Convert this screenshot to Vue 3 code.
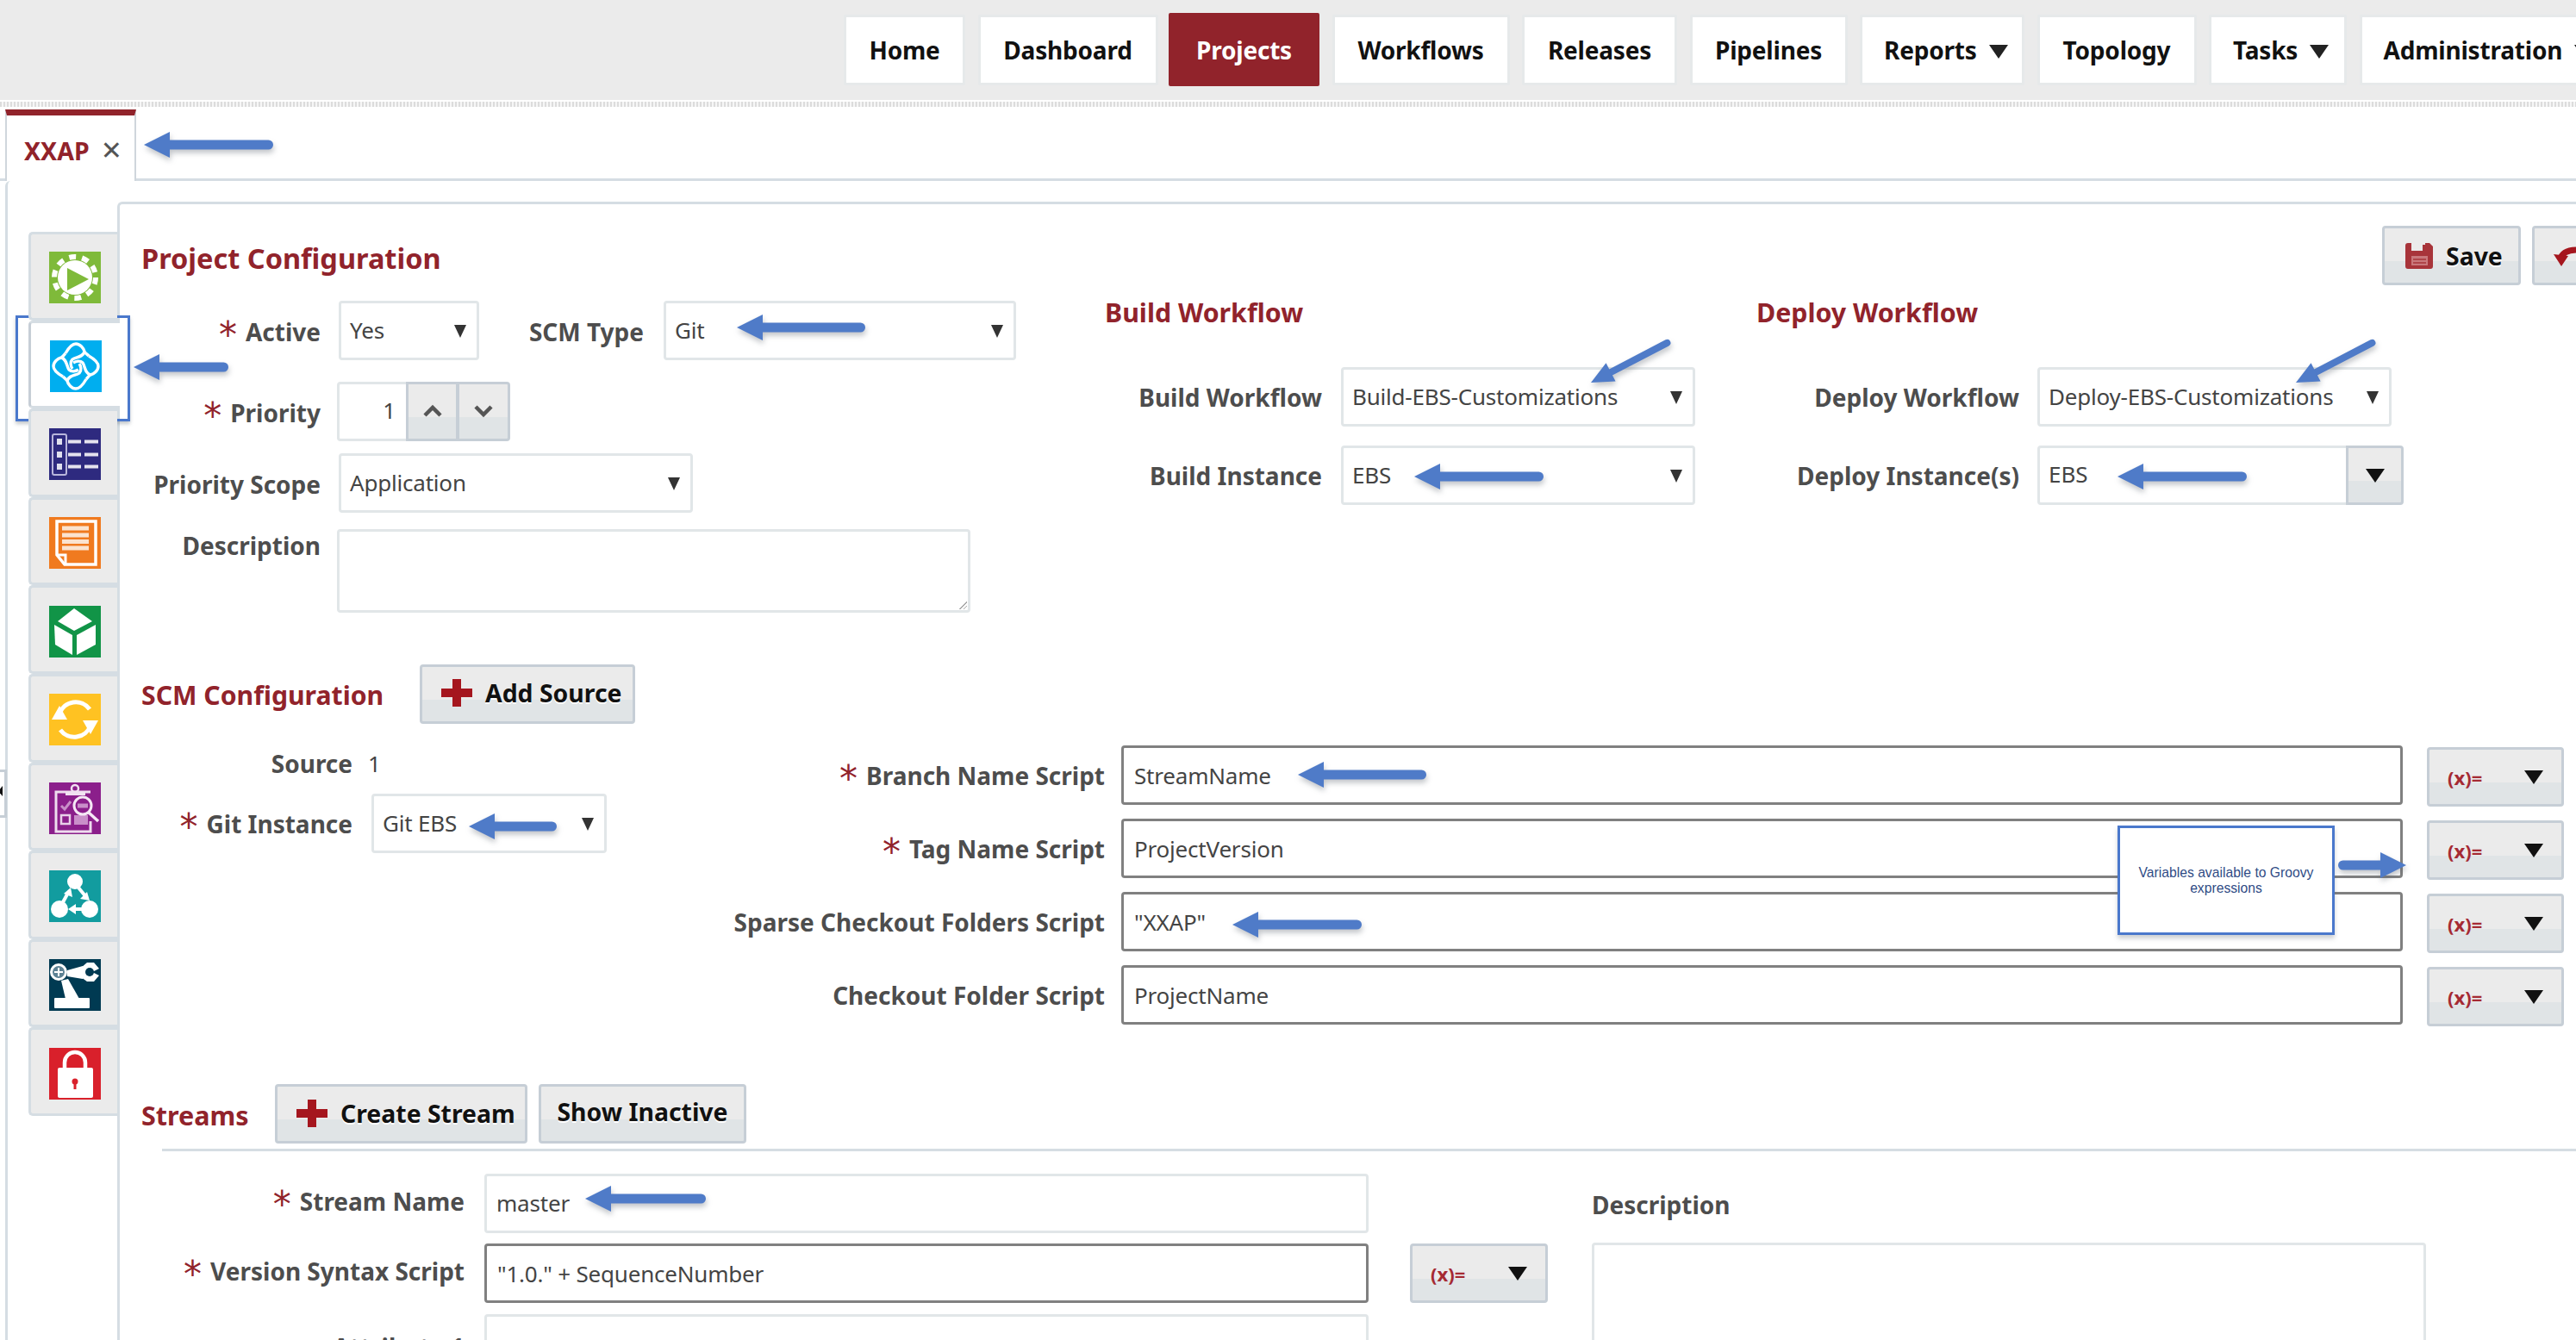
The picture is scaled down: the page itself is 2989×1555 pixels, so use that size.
<template>
  <div class="page">
    <!-- top navigation -->
    <header class="topbar">
      <a
        v-for="item in navItems"
        :key="item.label"
        class="nav-btn"
        :class="{ active: item.active, 'has-caret': item.caret }"
        :style="{ width: item.width + 'px' }"
      >
        {{ item.label }}
        <span v-if="item.caret" class="nav-caret"></span>
      </a>
    </header>
    <div class="stripe"></div>

    <div class="tab-strip">
      <div class="tab">
        <span class="tab-title">XXAP</span>
        <span class="tab-close">✕</span>
      </div>
    </div>

    <div class="outer">
      <!-- icon rail -->
      <nav class="rail">
        <div
          v-for="tab in railTabs"
          :key="tab.name"
          class="rail-tab"
          :class="{ current: tab.name === 'workflow' }"
        >
          <svg class="rail-icon" viewBox="0 0 60 60" :style="{ background: tab.color }">
            <g v-if="tab.name === 'run'">
              <circle cx="30" cy="30" r="20" fill="#fff" />
              <circle cx="30" cy="30" r="24" fill="none" stroke="#fff" stroke-width="6" stroke-dasharray="8 7.08" />
              <path d="M21 19 L46 32 L21 45 Z" fill="#7fba3a" />
            </g>
            <g v-if="tab.name === 'workflow'" fill="none" stroke="#fff" stroke-width="3.4">
              <g v-for="deg in [0, 90, 180, 270]" :key="deg" :transform="`rotate(${deg} 30 30)`">
                <path d="M18 15 C22 8 26 4 30 4 C35 4 39 9 40 13 C41 15 43 16 45 18" />
                <path d="M40 13 C38 20 30 19 26 22 C23 25 24 30 26 33" />
              </g>
            </g>
            <g v-if="tab.name === 'list'">
              <rect x="4" y="7" width="16" height="47" rx="2" fill="none" stroke="#b9b6dc" stroke-width="2" />
              <rect x="9" y="12" width="6" height="7" fill="#e0e0ee" />
              <rect x="9" y="27" width="6" height="7" fill="#e0e0ee" />
              <rect x="9" y="41" width="6" height="7" fill="#e0e0ee" />
              <path d="M22 15.5 H37 M41 15.5 H57 M22 30.5 H37 M41 30.5 H57 M22 44.5 H37 M41 44.5 H57" stroke="#e4e2ee" stroke-width="4" />
            </g>
            <g v-if="tab.name === 'doc'">
              <path d="M9 5 H54 V55 H18 L9 44 Z" fill="none" stroke="#fff" stroke-width="3.5" />
              <path d="M10 44 H19 V54" fill="none" stroke="#fff" stroke-width="3" />
              <path d="M15 13 H46 M15 21 H46 M15 28.500 H46 M15 36 H46" stroke="#fbe3cf" stroke-width="5" />
            </g>
            <g v-if="tab.name === 'cube'" fill="#fff">
              <path d="M29 3 L50 18 L29 29 L10 18 Z" />
              <path d="M6 22 L27 34 V57 L7 45 Z" />
              <path d="M54 22 L32 34 V57 L54 45 Z" />
            </g>
            <g v-if="tab.name === 'sync'" fill="none" stroke="#fff" stroke-width="5">
              <path d="M12 23 A20 20 0 0 1 47 18" />
              <path d="M48 37 A20 20 0 0 1 13 42" />
              <path d="M3 30 L12 14 L21 30 Z M57 31 L48 47 L39 31 Z" fill="#fff" stroke="none" />
            </g>
            <g v-if="tab.name === 'audit'">
              <path d="M48 45 V57 H8 V11 H48" fill="none" stroke="#eedcee" stroke-width="3" />
              <path d="M19 11 H42 V15 H19 Z" fill="#f1e2f1" />
              <circle cx="30" cy="7" r="4" fill="none" stroke="#f1e2f1" stroke-width="2.5" />
              <path d="M14 27 L18 31 L25 22" fill="none" stroke="#c98fc9" stroke-width="3" />
              <rect x="14" y="38" width="10" height="10" fill="none" stroke="#e8cfe8" stroke-width="2.5" />
              <rect x="29" y="38" width="16" height="11" fill="#c98fc9" />
              <circle cx="39" cy="27" r="10" fill="#8b1f8b" stroke="#f5e8f5" stroke-width="3" />
              <path d="M33 27 H45" stroke="#c98fc9" stroke-width="5" />
              <path d="M46 35 L57 45" stroke="#f5e8f5" stroke-width="3.5" />
            </g>
            <g v-if="tab.name === 'network'" fill="#fff">
              <circle cx="30" cy="13" r="9" />
              <circle cx="12" cy="45" r="10" />
              <circle cx="47" cy="45" r="10" />
              <path d="M34 20 L43 31" stroke="#fff" stroke-width="4" />
              <path d="M47 35 L36 33 L44 25 Z" />
              <path d="M16 37 L22 26" stroke="#fff" stroke-width="4" />
              <path d="M25 20 L27 31 L17 27 Z" />
              <path d="M38 45 H26" stroke="#fff" stroke-width="4" />
              <path d="M22 45 L31 39 L31 51 Z" />
            </g>
            <g v-if="tab.name === 'robot'">
              <rect x="6" y="45" width="41" height="12" rx="1" fill="#fff" />
              <path d="M14 25 L22 23 L35 46 L19 46 Z" fill="#fff" />
              <circle cx="11" cy="15" r="8.500" fill="#5d8294" stroke="#fff" stroke-width="3" />
              <path d="M11 10 V20 M6 15 H16" stroke="#fff" stroke-width="2" />
              <path d="M21 13 L39 8 V23 L21 20 Z" fill="#fff" />
              <path d="M37 10 L44 4 H52 L58 11 L50 15 L58 19 L52 26 H44 L37 21 Z" fill="#fff" />
              <circle cx="47" cy="15" r="5" fill="#003a52" />
            </g>
            <g v-if="tab.name === 'security'">
              <path d="M18 26 V17 A12 12 0 0 1 42 17 V26" fill="none" stroke="#fff" stroke-width="4.500" />
              <rect x="10" y="23" width="41" height="35" rx="2" fill="#fff" />
              <circle cx="30" cy="39" r="3.500" fill="#d9202b" />
              <rect x="28.500" y="39" width="3" height="9" fill="#d9202b" />
            </g>
          </svg>
        </div>
      </nav>

      <main class="panel">
        <!-- project config -->
        <section class="config">
          <div class="col-project">
            <h2 class="heading project-heading">Project Configuration</h2>
            <div class="row first-row">
              <label class="label w-208"><i class="req">*</i>Active</label>
              <div class="field select w-163">Yes<span class="caret"></span></div>
              <label class="label scm-type">SCM Type</label>
              <div class="field select w-409">Git<span class="caret"></span></div>
            </div>
            <div class="row priority-row">
              <label class="label w-208"><i class="req">*</i>Priority</label>
              <div class="spinner">
                <div class="spinner-value">1</div>
                <button class="spin-btn">
                  <svg width="24" height="16" viewBox="0 0 24 16"><path d="M3 13 L12 4 L21 13" fill="none" stroke="#555" stroke-width="4.500" /></svg>
                </button>
                <button class="spin-btn">
                  <svg width="24" height="16" viewBox="0 0 24 16"><path d="M3 3 L12 12 L21 3" fill="none" stroke="#555" stroke-width="4.500" /></svg>
                </button>
              </div>
            </div>
            <div class="row scope-row">
              <label class="label w-208">Priority Scope</label>
              <div class="field select w-411">Application<span class="caret"></span></div>
            </div>
            <div class="row desc-row">
              <label class="label w-208">Description</label>
              <div class="field textarea"></div>
            </div>
          </div>

          <div class="col-build">
            <h3 class="heading sub-heading">Build Workflow</h3>
            <div class="row">
              <label class="label w-252">Build Workflow</label>
              <div class="field select w-411">Build-EBS-Customizations<span class="caret"></span></div>
            </div>
            <div class="row row-gap">
              <label class="label w-252">Build Instance</label>
              <div class="field select w-411">EBS<span class="caret"></span></div>
            </div>
          </div>

          <div class="col-deploy">
            <div class="actions">
              <button class="btn save-btn">
                <svg width="32" height="30" viewBox="0 0 32 30">
                  <path d="M0 3 Q0 0 3 0 H7 V9 H20 V2 H23 V0 H28 L32 4 V27 Q32 30 29 30 H3 Q0 30 0 27 Z" fill="#a8343a" />
                  <rect x="7" y="15" width="19" height="11" fill="#c9787c" />
                  <path d="M9 19 H24 M9 23 H24" stroke="#a8343a" stroke-width="1.500" />
                </svg>
                Save
              </button>
              <button class="btn undo-btn">
                <svg width="28" height="26" viewBox="0 0 28 26">
                  <path d="M8 17 Q10 6 28 6" fill="none" stroke="#a5161e" stroke-width="7" />
                  <path d="M0 11 L9 25 L17 13 Z" fill="#a5161e" />
                </svg>
              </button>
            </div>
            <h3 class="heading sub-heading deploy-heading">Deploy Workflow</h3>
            <div class="row">
              <label class="label w-305">Deploy Workflow</label>
              <div class="field select w-411">Deploy-EBS-Customizations<span class="caret"></span></div>
            </div>
            <div class="row row-gap">
              <label class="label w-305">Deploy Instance(s)</label>
              <div class="combo">
                <div class="combo-text">EBS</div>
                <button class="combo-btn"><span class="fx-caret"></span></button>
              </div>
            </div>
          </div>
        </section>

        <!-- scm config -->
        <section class="scm">
          <div class="title-row">
            <h2 class="heading scm-heading">SCM Configuration</h2>
            <button class="btn add-btn">
              <span class="plus"></span>
              Add Source
            </button>
          </div>
          <div class="scm-body">
            <div class="scm-left">
              <div class="row source-row">
                <label class="label w-245">Source</label>
                <span class="value">1</span>
              </div>
              <div class="row git-row">
                <label class="label w-245"><i class="req">*</i>Git Instance</label>
                <div class="field select w-273">Git EBS<span class="caret"></span></div>
              </div>
            </div>
            <div class="scm-right">
              <div v-for="row in scriptRows" :key="row.label" class="row script-row">
                <label class="label w-442"><i v-if="row.required" class="req">*</i>{{ row.label }}</label>
                <div class="field dark w-1487">{{ row.value }}</div>
                <button class="btn fx-btn"><span class="fx">(x)=</span><span class="fx-caret"></span></button>
              </div>
            </div>
          </div>
        </section>

        <!-- streams -->
        <section class="streams">
          <div class="title-row">
            <h2 class="heading streams-heading">Streams</h2>
            <button class="btn stream-btn">
              <span class="plus"></span>
              Create Stream
            </button>
            <button class="btn inactive-btn">Show Inactive</button>
          </div>
          <div class="divider"></div>
          <div class="stream-body">
            <div class="stream-left">
              <div class="row">
                <label class="label w-375 lifted"><i class="req">*</i>Stream Name</label>
                <div class="field w-1026">master</div>
              </div>
              <div class="row stream-row">
                <label class="label w-375 lifted"><i class="req">*</i>Version Syntax Script</label>
                <div class="field dark w-1026">"1.0." + SequenceNumber</div>
                <button class="btn fx-btn stream-fx"><span class="fx">(x)=</span><span class="fx-caret"></span></button>
              </div>
              <div class="row stream-row attr-row">
                <label class="label w-375">Attribute 1</label>
                <div class="field w-1026"></div>
              </div>
            </div>
            <div class="stream-right">
              <label class="label desc-label">Description</label>
              <div class="field stream-desc"></div>
            </div>
          </div>
        </section>
      </main>
    </div>

    <!-- annotations drawn over the screenshot -->
    <div class="handle"><span></span></div>
    <div class="rail-highlight"></div>
    <div class="callout">Variables available to Groovy expressions</div>
    <svg class="marks" width="2989" height="1555" viewBox="0 0 2989 1555">
      <g v-for="(a, i) in arrowShapes" :key="i">
        <path :d="a.shaft" fill="none" stroke="#4f7bc8" :stroke-width="a.thick" stroke-linecap="round" />
        <path :d="a.head" fill="#4f7bc8" />
      </g>
    </svg>
  </div>
</template>

<script setup>
import { computed } from 'vue'

const navItems = [
  { label: 'Home', width: 141 },
  { label: 'Dashboard', width: 209 },
  { label: 'Projects', width: 175, active: true },
  { label: 'Workflows', width: 206 },
  { label: 'Releases', width: 180 },
  { label: 'Pipelines', width: 183 },
  { label: 'Reports', width: 191, caret: true },
  { label: 'Topology', width: 185 },
  { label: 'Tasks', width: 160, caret: true },
  { label: 'Administration', width: 280, caret: true }
]

const railTabs = [
  { name: 'run', color: '#7fba3a' },
  { name: 'workflow', color: '#00aeef' },
  { name: 'list', color: '#2e2a7f' },
  { name: 'doc', color: '#f07a1f' },
  { name: 'cube', color: '#119447' },
  { name: 'sync', color: '#ffc222' },
  { name: 'audit', color: '#8b1f8b' },
  { name: 'network', color: '#129c9f' },
  { name: 'robot', color: '#003a52' },
  { name: 'security', color: '#d9202b' }
]

const scriptRows = [
  { label: 'Branch Name Script', value: 'StreamName', required: true },
  { label: 'Tag Name Script', value: 'ProjectVersion', required: true },
  { label: 'Sparse Checkout Folders Script', value: '"XXAP"' },
  { label: 'Checkout Folder Script', value: 'ProjectName' }
]

// tip x, tip y, tail x, tail y
const arrows = [
  [167, 168, 317, 168],
  [855, 380, 1004, 380],
  [155, 426, 265, 426],
  [1641, 553, 1791, 553],
  [2457, 553, 2607, 553],
  [1506, 899, 1655, 899],
  [544, 959, 646, 959],
  [1430, 1073, 1580, 1073],
  [2792, 1004, 2713, 1004],
  [679, 1391, 819, 1391],
  [1846, 444, 1938, 396, true],
  [2664, 444, 2756, 396, true]
]

const arrowShapes = computed(() => arrows.map(([tx, ty, ex, ey, slim]) => {
  const len = Math.hypot(ex - tx, ey - ty)
  const ux = (ex - tx) / len
  const uy = (ey - ty) / len
  const thick = slim ? 8 : 11
  const headLen = slim ? 26 : 30
  const half = slim ? 12 : 15
  const bx = tx + ux * headLen
  const by = ty + uy * headLen
  const px = -uy * half
  const py = ux * half
  return {
    thick,
    shaft: `M${bx} ${by} L${ex - ux * thick / 2} ${ey - uy * thick / 2}`,
    head: `M${tx} ${ty} L${bx + px} ${by + py} L${bx - px} ${by - py} Z`
  }
}))
</script>

<style>
html, body {
  margin: 0;
  background: #fff;
}
</style>

<style scoped>
.page {
  position: relative;
  width: 2989px;
  height: 1555px;
  overflow: hidden;
  background: #fff;
  font-family: "Noto Sans", "Open Sans", sans-serif;
  font-size: 26px;
  color: #444;
}

/* Верхнее меню */
.topbar {
  display: flex;
  align-items: center;
  gap: 14.5px;
  height: 116px;
  padding-left: 979px;
  background: #ebebeb;
  box-sizing: border-box;
  padding-bottom: 1px;
}

.nav-btn {
  display: flex;
  flex: none;
  align-items: center;
  justify-content: center;
  gap: 14px;
  height: 82px;
  box-sizing: border-box;
  background: #fff;
  border: 3px solid #e6e9ea;
  border-radius: 2px;
  color: #111;
  font-weight: 700;
  font-size: 28px;
  letter-spacing: -0.2px;
  white-space: nowrap;
}

.nav-btn.active {
  height: 85px;
  margin-left: -2px;
  background: #91232b;
  border-color: #91232b;
  color: #fff;
}

.nav-btn.has-caret {
  justify-content: flex-start;
  padding-left: 25px;
}

.nav-caret {
  width: 0;
  height: 0;
  border-left: 11px solid transparent;
  border-right: 11px solid transparent;
  border-top: 16px solid #222;
  margin-top: 4px;
}

.stripe {
  height: 6px;
  margin-top: 2px;
  background: repeating-linear-gradient(90deg, #dcdcdc 0 2px, #f6f6f6 2px 4px);
}

.tab-strip {
  height: 83px;
  margin-top: 3px;
  padding-left: 6px;
  box-sizing: border-box;
  border-bottom: 3px solid #d5dde3;
}

.tab {
  display: flex;
  align-items: center;
  box-sizing: border-box;
  width: 152px;
  height: 83px;
  padding: 5px 0 0 20px;
  background: #fff;
  border-top: 7px solid #91232b;
  border-left: 2px solid #cfd6dc;
  border-right: 2px solid #cfd6dc;
}

.tab-title {
  color: #91232b;
  font-weight: 700;
  font-size: 28.5px;
}

.tab-close {
  margin-left: 13px;
  color: #555;
  font-size: 30px;
  line-height: 30px;
  font-weight: 700;
  font-family: "DejaVu Sans", sans-serif;
}

.outer {
  display: flex;
  margin-left: 6px;
  height: 1345px;
  border-left: 3px solid #d5dde3;
  border-top-left-radius: 6px;
}

/* Иконки слева */
.rail {
  flex: none;
  width: 103px;
  margin: 59px 0 0 24px;
  position: relative;
  z-index: 1;
}

.rail-tab {
  display: flex;
  align-items: center;
  justify-content: center;
  box-sizing: border-box;
  height: 102.600px;
  padding-top: 4px;
  background: #ebebeb;
  border: 3px solid #d5dde3;
  border-right: none;
  border-radius: 5px 0 0 5px;
}

.rail-tab.current {
  width: 106px;
  background: #fff;
  border-left-color: #c6ced6;
}

.rail-icon {
  display: block;
  width: 60px;
  height: 60px;
  margin-left: 1px;
}

.panel {
  flex: 1;
  margin-top: 24px;
  padding-left: 25px;
  border-left: 3px solid #d5dde3;
  border-top: 3px solid #d5dde3;
  border-top-left-radius: 6px;
  min-width: 0;
}

.config {
  display: flex;
  height: 533px;
}

.col-project {
  flex: none;
  width: 1118px;
  padding-top: 43px;
}

.col-project .label {
  padding-top: 2px;
}

.col-build {
  flex: none;
  width: 756px;
  padding-top: 106px;
}

.col-deploy {
  flex: none;
  width: 951px;
  padding-top: 25px;
}

.actions {
  display: flex;
  gap: 13px;
  margin-left: 726px;
}

.heading {
  margin: 0;
  height: 40px;
  line-height: 40px;
  color: #91232b;
  font-weight: 700;
  white-space: nowrap;
}

.project-heading {
  font-size: 32.5px;
  margin-bottom: 29px;
}

.sub-heading {
  font-size: 30.3px;
  margin-bottom: 43px;
}

.deploy-heading {
  margin-top: 12px;
}

.row {
  display: flex;
  align-items: center;
}

.row-gap {
  margin-top: 22px;
}

.priority-row {
  margin-top: 25px;
}

.scope-row {
  margin-top: 14px;
}

.desc-row {
  margin-top: 19px;
  align-items: flex-start;
}

.desc-row .label {
  margin-top: -2px;
}

.label {
  display: block;
  flex: none;
  box-sizing: border-box;
  text-align: right;
  color: #4d4d4d;
  font-weight: 700;
  font-size: 28px;
  white-space: nowrap;
}

.lifted {
  margin-top: -6px;
}

.req {
  margin-right: 10px;
  color: #91232b;
  font-style: normal;
  font-weight: 400;
  font-size: 42px;
  line-height: 20px;
  vertical-align: -7px;
  font-family: "DejaVu Sans", sans-serif;
}

.w-208 { width: 208px; margin-right: 21px; }
.w-245 { width: 245px; margin-right: 22px; }
.w-252 { width: 252px; margin-right: 22px; }
.w-305 { width: 305px; margin-right: 21px; }
.w-375 { width: 375px; margin-right: 23px; }
.w-442 { width: 442px; margin-right: 19px; }

.scm-type {
  width: 134px;
  margin: 0 23px 0 57px;
}

.field {
  display: flex;
  flex: none;
  align-items: center;
  box-sizing: border-box;
  position: relative;
  height: 69px;
  padding: 0 0 1px 11px;
  background: #fff;
  border: 3px solid #e1e6e8;
  border-radius: 4px;
  color: #444;
  font-size: 26px;
  letter-spacing: -0.2px;
  white-space: nowrap;
}

.field.select {
  padding-left: 10px;
}

.w-163 { width: 163px; }
.w-273 { width: 273px; }
.w-409 { width: 409px; }
.w-411 { width: 411px; }
.w-1026 { width: 1026px; }
.w-1487 { width: 1487px; }

.caret {
  position: absolute;
  right: 12px;
  top: 25px;
  width: 0;
  height: 0;
  border-left: 7px solid transparent;
  border-right: 7px solid transparent;
  border-top: 15px solid #333;
}

.field.dark {
  padding: 1px 0 0 12px;
  border-color: #808080;
}

.textarea {
  width: 735px;
  height: 97px;
  margin-left: -2px;
}

/* уголок resize у textarea */
.textarea::after {
  content: "";
  position: absolute;
  right: 1px;
  bottom: 1px;
  width: 10px;
  height: 10px;
  background: linear-gradient(135deg, transparent 0 55%, #aaa 55% 62%, transparent 62% 78%, #aaa 78% 85%, transparent 85%);
}

.spinner {
  display: flex;
  height: 69px;
  margin-left: -2px;
}

.spinner-value {
  box-sizing: border-box;
  width: 80px;
  padding: 12px 12px 0 0;
  text-align: right;
  background: #fff;
  border: 3px solid #e1e6e8;
  border-right: none;
  border-radius: 4px 0 0 4px;
}

.spin-btn,
.btn,
.combo-btn {
  font-family: inherit;
  background: linear-gradient(#ebebeb 0 60%, #e0e4e6 60% 100%);
  border: 3px solid #c6ced6;
  border-radius: 4px;
  box-sizing: border-box;
  padding: 0;
}

.spin-btn {
  display: flex;
  align-items: center;
  justify-content: center;
  width: 61px;
  height: 69px;
  padding-bottom: 2px;
  border-radius: 0;
}

.spin-btn + .spin-btn {
  margin-left: -1px;
  border-left-width: 2px;
  border-radius: 0 4px 4px 0;
}

.combo {
  display: flex;
  width: 425px;
  height: 69px;
}

.combo-text {
  box-sizing: border-box;
  width: 358px;
  padding: 12px 0 0 10px;
  background: #fff;
  border: 3px solid #e1e6e8;
  border-right: none;
  border-radius: 4px 0 0 4px;
}

.combo-btn {
  display: flex;
  align-items: center;
  justify-content: center;
  width: 67px;
  height: 69px;
  border-radius: 0 4px 4px 0;
}

.btn {
  display: flex;
  align-items: center;
  height: 69px;
  color: #111;
  font-size: 28.4px;
  font-weight: 700;
  white-space: nowrap;
  text-shadow: 0 2px 0 #fff;
}

.save-btn {
  flex: none;
  width: 161px;
  gap: 15px;
  padding: 0 0 0 24px;
}

.undo-btn {
  flex: none;
  width: 90px;
  padding-left: 22px;
}

.title-row {
  display: flex;
  align-items: center;
  height: 70px;
}

.scm-heading {
  width: 323px;
  padding-top: 4px;
  font-size: 30.2px;
}

.plus {
  position: relative;
  display: block;
  flex: none;
  width: 36px;
  height: 32px;
}

.plus::before,
.plus::after {
  content: "";
  position: absolute;
  background: #a5161e;
}

.plus::before {
  left: 13px;
  top: 0;
  width: 10px;
  height: 32px;
}

.plus::after {
  left: 0;
  top: 11px;
  width: 36px;
  height: 10px;
}

.add-btn {
  width: 250px;
  gap: 15px;
  padding: 0 0 2px 22px;
}

.scm-body {
  display: flex;
  margin-top: 25px;
}

.scm-left {
  flex: none;
  width: 676px;
}

.source-row {
  height: 42px;
}

.value {
  margin-left: -4px;
  font-size: 26px;
  color: #444;
}

.git-row {
  margin-top: 14px;
}

.script-row + .script-row {
  margin-top: 16px;
}

.fx-btn {
  flex: none;
  justify-content: space-between;
  width: 159px;
  margin: 2px 0 -2px 28px;
  padding: 0 21px 0 21px;
  text-shadow: none;
}

.fx {
  color: #a52a33;
  font-size: 22px;
  font-weight: 700;
  letter-spacing: 0;
}

.fx-caret {
  width: 0;
  height: 0;
  border-left: 11px solid transparent;
  border-right: 11px solid transparent;
  border-top: 16px solid #111;
}

.streams {
  margin-top: 68px;
}

.streams-heading {
  width: 155px;
  padding-top: 4px;
  font-size: 30.5px;
}

.stream-btn {
  width: 293px;
  gap: 15px;
  margin-right: 13px;
  padding: 0 0 1px 22px;
}

.inactive-btn {
  justify-content: center;
  width: 241px;
  padding-bottom: 5px;
}

.divider {
  height: 3px;
  margin: 6px 0 0 24px;
  background: #d5dde3;
}

.stream-body {
  display: flex;
  margin-top: 26px;
}

.stream-left {
  flex: none;
  width: 1683px;
}

.stream-row {
  margin-top: 12px;
}

.stream-fx {
  margin: 0 0 0 48px;
  width: 160px;
}

.attr-row {
  align-items: flex-start;
  margin-top: 13px;
}

.attr-row .label {
  margin-top: 19px;
}

.stream-right {
  flex: none;
  width: 968px;
  padding-top: 16px;
}

.desc-label {
  height: 40px;
  line-height: 40px;
  text-align: left;
}

.stream-desc {
  width: 968px;
  height: 200px;
  margin-top: 24px;
}

/* Пометки поверх скриншота */
.handle {
  position: absolute;
  left: 0;
  top: 893px;
  box-sizing: border-box;
  width: 8px;
  height: 56px;
  background: #fff;
  border: 3px solid #c6ced6;
  border-left: none;
}

.handle span {
  position: absolute;
  left: -2px;
  top: 16px;
  width: 0;
  height: 0;
  border-top: 6px solid transparent;
  border-bottom: 6px solid transparent;
  border-right: 5px solid #111;
}

.rail-highlight {
  position: absolute;
  left: 18px;
  top: 366px;
  box-sizing: border-box;
  width: 133px;
  height: 123px;
  border: 3px solid #4a78cc;
  box-shadow: 0 3px 4px rgba(90, 100, 110, 0.35);
}

.callout {
  position: absolute;
  left: 2457px;
  top: 958px;
  display: flex;
  align-items: center;
  justify-content: center;
  box-sizing: border-box;
  width: 252px;
  height: 127px;
  padding: 0 20px;
  background: #fff;
  border: 3px solid #4a78cc;
  box-shadow: 0 4px 5px rgba(90, 100, 110, 0.3);
  color: #2f4b85;
  font-family: "Liberation Sans", sans-serif;
  font-size: 15.7px;
  line-height: 18px;
  text-align: center;
}

.marks {
  position: absolute;
  left: 0;
  top: 0;
  pointer-events: none;
  filter: drop-shadow(1px 4px 3px rgba(80, 90, 100, 0.35));
}
</style>
